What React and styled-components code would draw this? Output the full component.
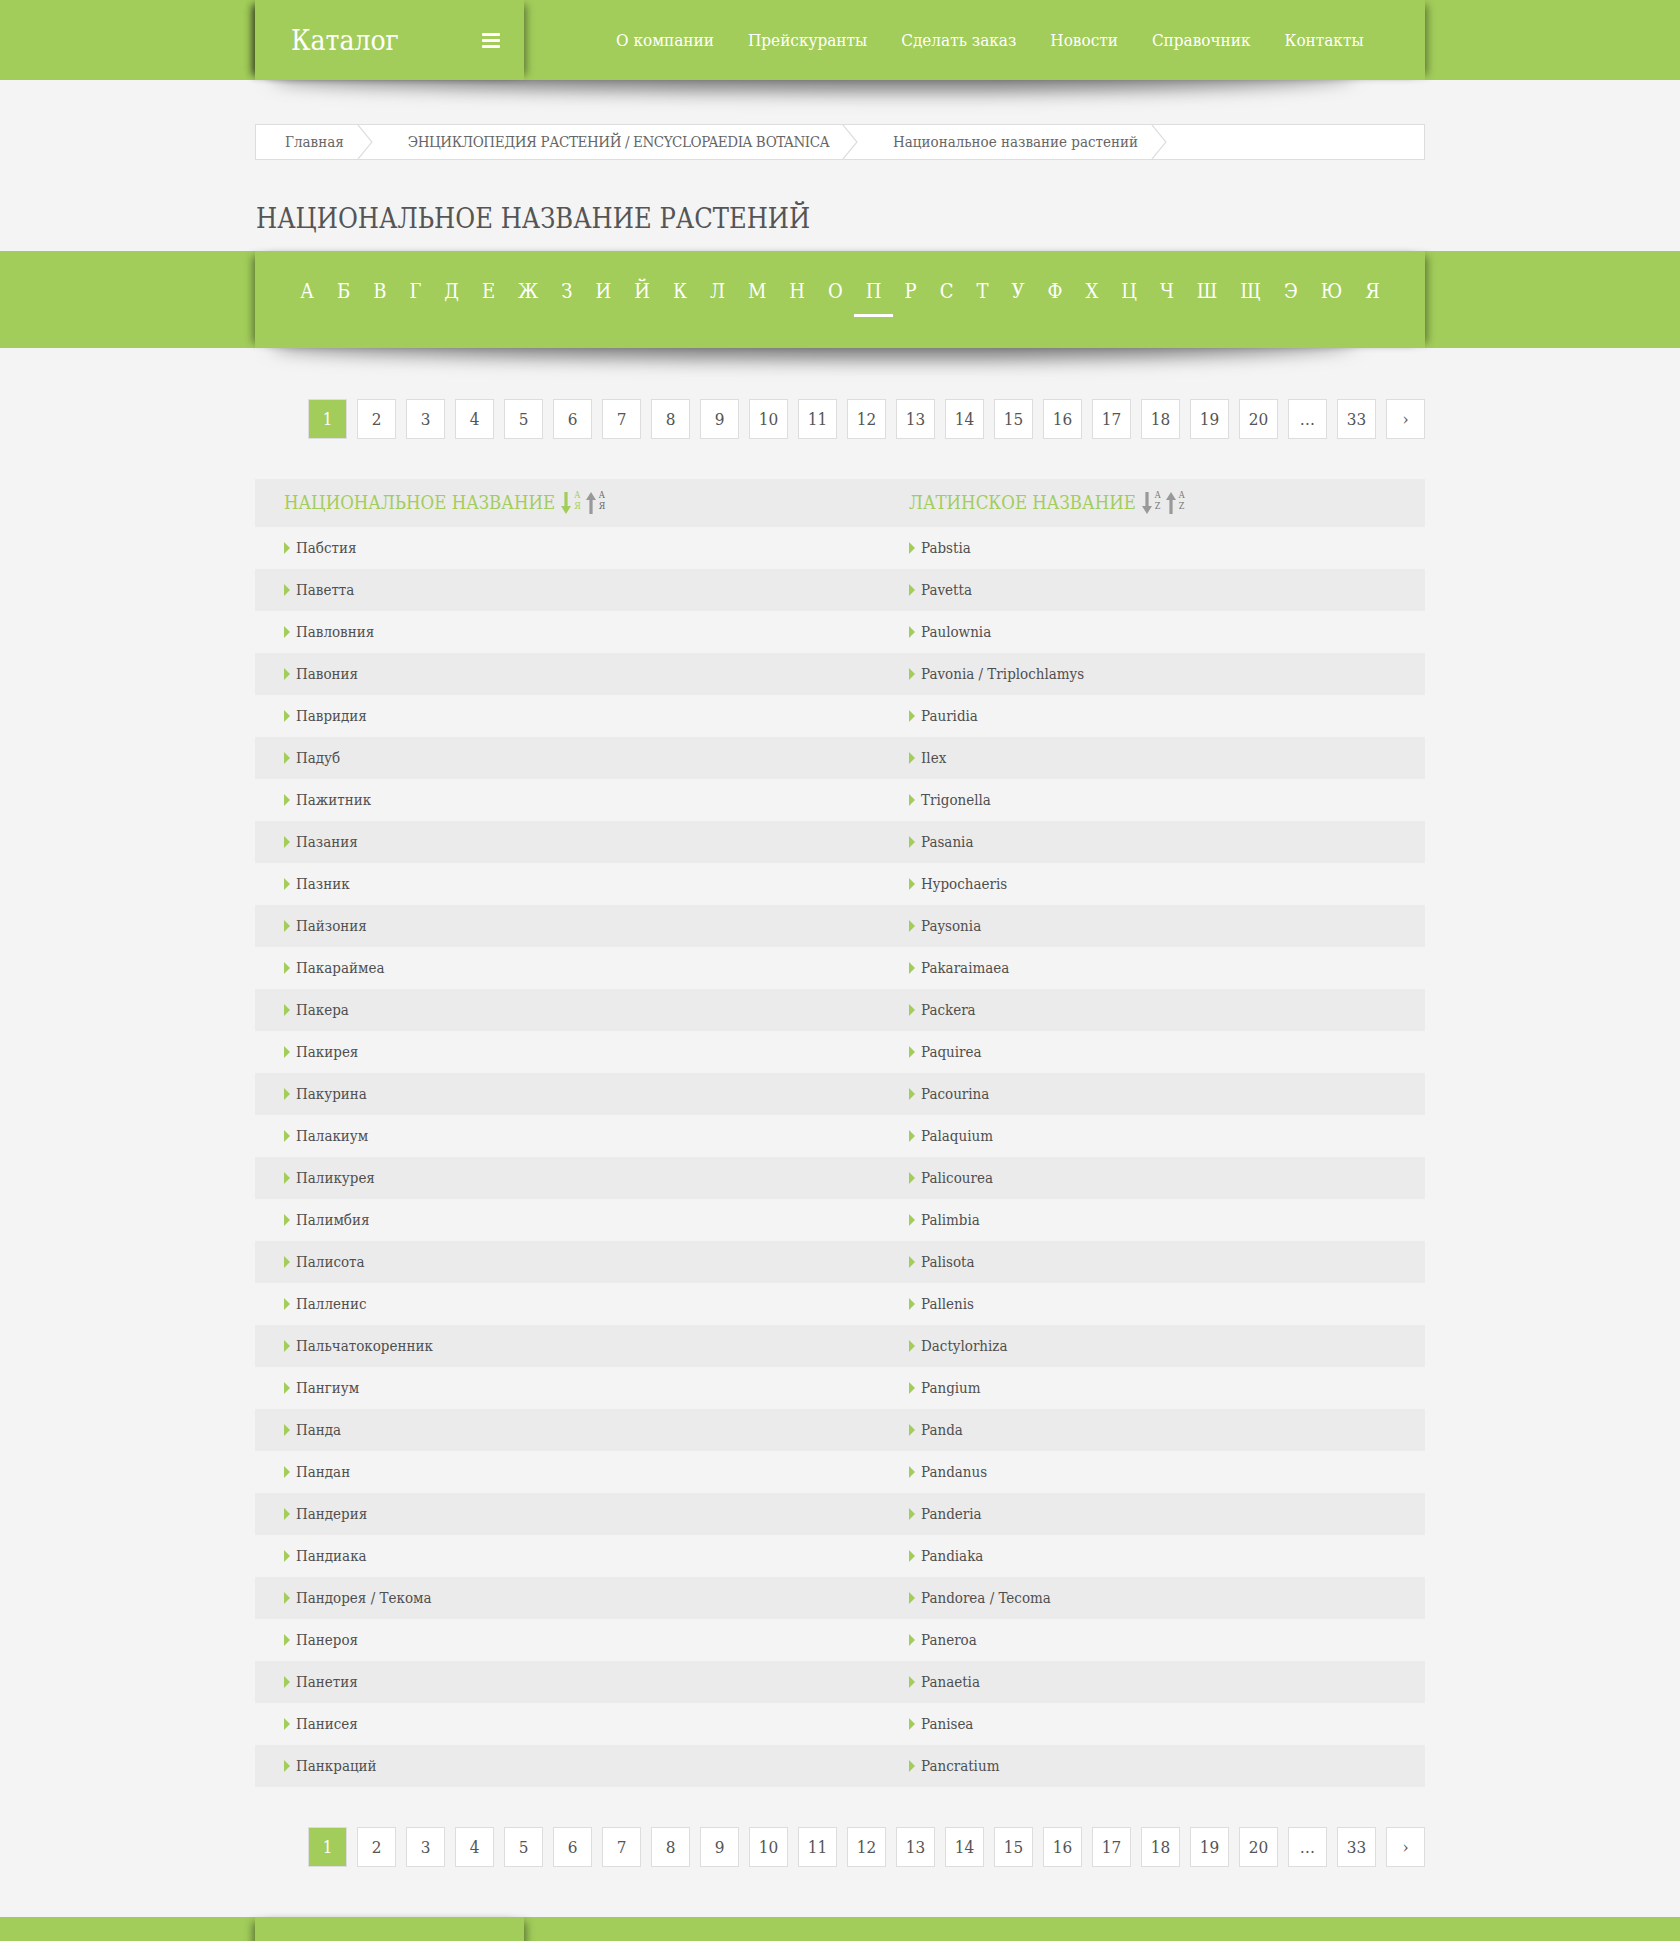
import styled, { createGlobalStyle, css } from 'styled-components';

const GREEN = '#a2cd5a';
const FONT = '"DejaVu Serif Condensed", "DejaVu Serif", "Liberation Serif", serif';

const GlobalStyle = createGlobalStyle`
  html {
    background: #f4f4f4;
  }
  body {
    margin: 0;
    padding: 0;
    font-family: ${FONT};
    font-stretch: condensed;
    color: #555;
  }
  * { box-sizing: border-box; }
`;

const letters = 'А Б В Г Д Е Ж З И Й К Л М Н О П Р С Т У Ф Х Ц Ч Ш Щ Э Ю Я'.split(' ');

const plants = [
  ['Пабстия', 'Pabstia'],
  ['Паветта', 'Pavetta'],
  ['Павловния', 'Paulownia'],
  ['Павония', 'Pavonia / Triplochlamys'],
  ['Павридия', 'Pauridia'],
  ['Падуб', 'Ilex'],
  ['Пажитник', 'Trigonella'],
  ['Пазания', 'Pasania'],
  ['Пазник', 'Hypochaeris'],
  ['Пайзония', 'Paysonia'],
  ['Пакараймеа', 'Pakaraimaea'],
  ['Пакера', 'Packera'],
  ['Пакирея', 'Paquirea'],
  ['Пакурина', 'Pacourina'],
  ['Палакиум', 'Palaquium'],
  ['Паликурея', 'Palicourea'],
  ['Палимбия', 'Palimbia'],
  ['Палисота', 'Palisota'],
  ['Палленис', 'Pallenis'],
  ['Пальчатокоренник', 'Dactylorhiza'],
  ['Пангиум', 'Pangium'],
  ['Панда', 'Panda'],
  ['Пандан', 'Pandanus'],
  ['Пандерия', 'Panderia'],
  ['Пандиака', 'Pandiaka'],
  ['Пандорея / Текома', 'Pandorea / Tecoma'],
  ['Панероя', 'Paneroa'],
  ['Панетия', 'Panaetia'],
  ['Панисея', 'Panisea'],
  ['Панкраций', 'Pancratium'],
];

const pages = ['1', '2', '3', '4', '5', '6', '7', '8', '9', '10', '11', '12', '13', '14', '15', '16', '17', '18', '19', '20', '…', '33', '›'];

const sideShadow = css`
  box-shadow: 7px 0 8px -5px rgba(0, 0, 0, 0.45), -7px 0 8px -5px rgba(0, 0, 0, 0.45);
`;

// зелёная полоса на всю ширину
const Band = styled.div`
  background: ${GREEN};
`;

const Container = styled.div`
  width: 1170px;
  margin: 0 auto;
`;

// контейнер на зелёной полосе: тени по бокам и "приподнятая" тень снизу
const BandInner = styled(Container)`
  position: relative;
  background: ${GREEN};
  ${sideShadow};

  &::after {
    content: '';
    position: absolute;
    left: 24px;
    right: 70px;
    bottom: 12px;
    height: 24px;
    z-index: -1;
    border-radius: 0 0 50% 80% / 0 0 100% 80%;
    box-shadow: 0 22px 18px rgba(0, 0, 0, 0.55);
    transform: skewX(-35deg);
    transform-origin: left bottom;
  }
`;

const HeaderInner = styled(BandInner)`
  display: flex;
  align-items: stretch;
  height: 80px;
`;

const CatalogBox = styled.div`
  width: 269px;
  display: flex;
  align-items: center;
  justify-content: space-between;
  padding: 0 24px 0 36px;
  background: ${GREEN};
  ${sideShadow};
  color: #fff;
  font-size: 28px;
  position: relative;
`;

const Burger = styled.span`
  display: flex;
  flex-direction: column;
  gap: 3px;
  width: 18px;

  & > i {
    display: block;
    height: 3px;
    background: #fff;
    border-radius: 1px;
  }
`;

const Nav = styled.nav`
  display: flex;
  align-items: center;
  gap: 34px;
  margin-left: 92px;
`;

const NavLink = styled.a`
  color: #fff;
  font-size: 17px;
  text-decoration: none;
  white-space: nowrap;
`;

const Breadcrumbs = styled(Container)`
  display: flex;
  height: 36px;
  margin-top: 44px;
  background: #fff;
  border: 1px solid #ddd;
`;

const Crumb = styled.div`
  display: flex;
  align-items: center;
  gap: 13px;
  padding-left: ${(p) => (p.$first ? '29px' : '35px')};
  font-size: 15px;
  letter-spacing: ${(p) => (p.$caps ? '-0.4px' : '0')};
  color: #666;
  white-space: nowrap;
`;

const Title = styled(Container)`
  margin-top: 42px;
  margin-bottom: 15px;
  font-size: 27px;
  line-height: 1.25;
  font-weight: normal;
  color: #555;
  padding-left: 1px;
`;

const LettersInner = styled(BandInner)`
  display: flex;
  justify-content: center;
  align-items: flex-start;
  height: 97px;
  padding-top: 28px;
`;

const Letter = styled.a`
  display: block;
  padding: 0 11.5px 11px;
  line-height: 24px;
  font-size: 20px;
  color: #fff;
  text-decoration: none;
  border-bottom: 3px solid ${(p) => (p.$active ? '#fff' : 'transparent')};
`;

const PagerRow = styled(Container)`
  display: flex;
  justify-content: flex-end;
  gap: 10px;
  margin-top: ${(p) => p.$top}px;
`;

const PageBtn = styled.a`
  width: 39px;
  height: 40px;
  display: flex;
  align-items: center;
  justify-content: center;
  font-size: 17px;
  color: ${(p) => (p.$active ? '#fff' : '#555')};
  background: ${(p) => (p.$active ? GREEN : '#fff')};
  border: 1px solid #ddd;
  text-decoration: none;
`;

const Table = styled(Container)`
  margin-top: 40px;
`;

const Row = styled.div`
  display: grid;
  grid-template-columns: 625px 1fr;
  height: ${(p) => (p.$head ? '48px' : '42px')};
  background: ${(p) => (p.$shade ? '#ebebeb' : 'transparent')};
`;

const Cell = styled.div`
  display: flex;
  align-items: center;
  padding-left: 29px;
  font-size: 15px;
  color: #4f4f4f;
`;

const HeadCell = styled(Cell)`
  font-size: 18.5px;
  color: ${GREEN};
`;

const Marker = styled.span`
  width: 0;
  height: 0;
  border-top: 6px solid transparent;
  border-bottom: 6px solid transparent;
  border-left: 6px solid ${GREEN};
  margin-right: 6px;
`;

const Sort = styled.span`
  display: flex;
  align-items: center;
  margin-left: ${(p) => p.$gap}px;
  gap: 3px;
`;

const SortLetters = styled.span`
  display: flex;
  flex-direction: column;
  font-size: 9px;
  line-height: 11px;
  color: ${(p) => p.$color};
  margin-top: -4px;
`;

const Footer = styled(Band)`
  margin-top: 50px;
`;

const FooterInner = styled(Container)`
  height: 120px;
`;

const FooterBox = styled.div`
  width: 269px;
  height: 100%;
  ${sideShadow};
`;

function Chevron() {
  return (
    <svg width="16" height="34" viewBox="0 0 16 34">
      <polyline points="1,0 15,17 1,34" fill="none" stroke="#dedede" strokeWidth="1.2" />
    </svg>
  );
}

function SortArrow({ up, color }) {
  return (
    <svg width="10" height="22" viewBox="0 0 10 22">
      {up ? (
        <>
          <polygon points="0,8 10,8 5,0" fill={color} />
          <rect x="3.4" y="7" width="3.2" height="15" fill={color} />
        </>
      ) : (
        <>
          <rect x="3.4" y="0" width="3.2" height="15" fill={color} />
          <polygon points="0,14 10,14 5,22" fill={color} />
        </>
      )}
    </svg>
  );
}

function SortIcon({ up, arrow, text, chars, gap }) {
  return (
    <Sort $gap={gap}>
      <SortArrow up={up} color={arrow} />
      <SortLetters $color={text}>
        <span>{chars[0]}</span>
        <span>{chars[1]}</span>
      </SortLetters>
    </Sort>
  );
}

function Pager({ top }) {
  return (
    <PagerRow $top={top}>
      {pages.map((p) => (
        <PageBtn key={p} href="#" $active={p === '1'}>
          {p}
        </PageBtn>
      ))}
    </PagerRow>
  );
}

export default function App() {
  return (
    <>
      <GlobalStyle />
      <Band>
        <HeaderInner>
          <CatalogBox>
            Каталог
            <Burger>
              <i />
              <i />
              <i />
            </Burger>
          </CatalogBox>
          <Nav>
            <NavLink href="#">О компании</NavLink>
            <NavLink href="#">Прейскуранты</NavLink>
            <NavLink href="#">Сделать заказ</NavLink>
            <NavLink href="#">Новости</NavLink>
            <NavLink href="#">Справочник</NavLink>
            <NavLink href="#">Контакты</NavLink>
          </Nav>
        </HeaderInner>
      </Band>

      <Breadcrumbs>
        <Crumb $first>
          Главная <Chevron />
        </Crumb>
        <Crumb $caps>
          ЭНЦИКЛОПЕДИЯ РАСТЕНИЙ / ENCYCLOPAEDIA BOTANICA <Chevron />
        </Crumb>
        <Crumb>
          Национальное название растений <Chevron />
        </Crumb>
      </Breadcrumbs>

      <Title as="h1">НАЦИОНАЛЬНОЕ НАЗВАНИЕ РАСТЕНИЙ</Title>

      <Band>
        <LettersInner>
          {letters.map((l) => (
            <Letter key={l} href="#" $active={l === 'П'}>
              {l}
            </Letter>
          ))}
        </LettersInner>
      </Band>

      <Pager top={51} />

      <Table>
        <Row $head $shade>
          <HeadCell>
            НАЦИОНАЛЬНОЕ НАЗВАНИЕ
            <SortIcon gap={6} arrow={GREEN} text={GREEN} chars={['А', 'Я']} />
            <SortIcon gap={5} up arrow="#999" text="#666" chars={['А', 'Я']} />
          </HeadCell>
          <HeadCell>
            ЛАТИНСКОЕ НАЗВАНИЕ
            <SortIcon gap={6} arrow="#999" text="#777" chars={['A', 'Z']} />
            <SortIcon gap={5} up arrow="#999" text="#777" chars={['A', 'Z']} />
          </HeadCell>
        </Row>
        {plants.map(([ru, lat], i) => (
          <Row key={ru} $shade={i % 2 === 1}>
            <Cell>
              <Marker />
              {ru}
            </Cell>
            <Cell>
              <Marker />
              {lat}
            </Cell>
          </Row>
        ))}
      </Table>

      <Pager top={40} />

      <Footer>
        <FooterInner>
          <FooterBox />
        </FooterInner>
      </Footer>
    </>
  );
}
